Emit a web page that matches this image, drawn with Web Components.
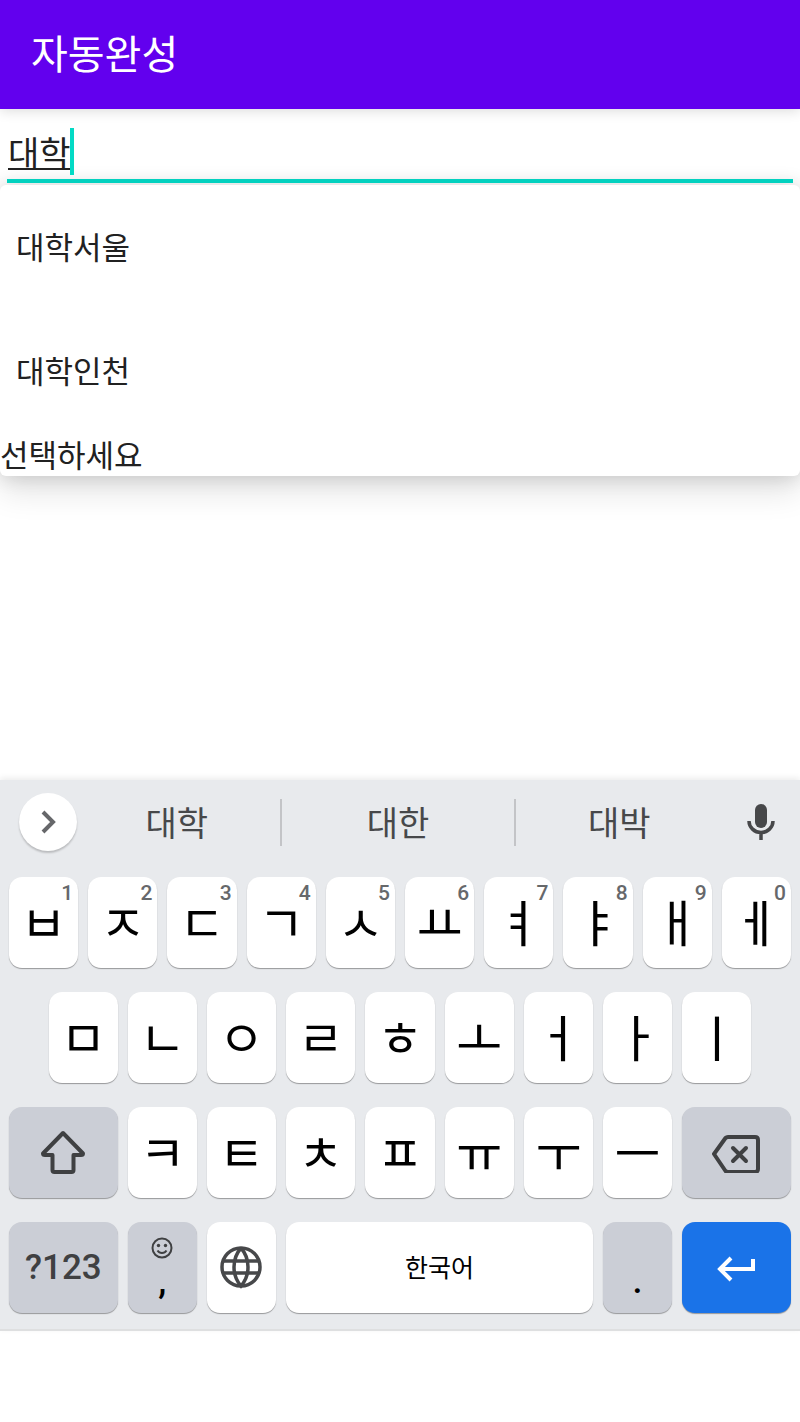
<!DOCTYPE html>
<html lang="ko">
<head>
<meta charset="utf-8">
<meta name="viewport" content="width=device-width, initial-scale=1">
<title>자동완성</title>
<style>
  body { margin: 0; background: #fff; color: #212121; font-family: Roboto, "Noto Sans CJK KR", sans-serif; }
</style>
</head>
<body>
<app-screen>
  <app-bar slot="bar">자동완성</app-bar>
  <auto-complete value="대학" label="검색어">
    <suggestion-item>대학서울</suggestion-item>
    <suggestion-item>대학인천</suggestion-item>
    <span slot="hint">선택하세요</span>
  </auto-complete>
  <soft-keyboard slot="keyboard">
    <candidate-bar slot="candidates">
      <candidate-word>대학</candidate-word>
      <candidate-word divided>대한</candidate-word>
      <candidate-word>대박</candidate-word>
    </candidate-bar>
    <key-cap hint="1">ㅂ</key-cap><key-cap hint="2">ㅈ</key-cap><key-cap hint="3">ㄷ</key-cap><key-cap hint="4">ㄱ</key-cap><key-cap hint="5">ㅅ</key-cap><key-cap hint="6">ㅛ</key-cap><key-cap hint="7">ㅕ</key-cap><key-cap hint="8">ㅑ</key-cap><key-cap hint="9">ㅐ</key-cap><key-cap hint="0">ㅔ</key-cap>
    <key-cap indent>ㅁ</key-cap><key-cap>ㄴ</key-cap><key-cap>ㅇ</key-cap><key-cap>ㄹ</key-cap><key-cap>ㅎ</key-cap><key-cap>ㅗ</key-cap><key-cap>ㅓ</key-cap><key-cap>ㅏ</key-cap><key-cap>ㅣ</key-cap>
    <key-cap wide tone="grey" row-start label="Shift"><key-icon name="shift"></key-icon></key-cap><key-cap>ㅋ</key-cap><key-cap>ㅌ</key-cap><key-cap>ㅊ</key-cap><key-cap>ㅍ</key-cap><key-cap>ㅠ</key-cap><key-cap>ㅜ</key-cap><key-cap>ㅡ</key-cap><key-cap wide tone="grey" label="삭제"><key-icon name="delete"></key-icon></key-cap>
    <key-cap wide tone="grey" face="label">?123</key-cap><key-cap tone="grey" face="low">,<key-icon slot="top" name="smile"></key-icon></key-cap><key-cap label="언어 전환"><key-icon name="globe"></key-icon></key-cap><key-cap space face="small">한국어</key-cap><key-cap tone="grey" face="low">.</key-cap><key-cap wide tone="blue" label="Enter"><key-icon name="enter"></key-icon></key-cap>
  </soft-keyboard>
</app-screen>

<script>
const define = (name, html, setup) => {
  const template = document.createElement('template');
  template.innerHTML = html;
  customElements.define(name, class extends HTMLElement {
    connectedCallback() {
      if (this.shadowRoot) return;
      const root = this.attachShadow({ mode: 'open' });
      root.append(template.content.cloneNode(true));
      if (setup) setup(this, root);
    }
  });
};

define('app-screen', `
  <style>
    :host { display: flex; flex-direction: column; min-height: 100vh; }
    main { flex: 1; }
    footer { padding-bottom: 91px; }
  </style>
  <slot name="bar"></slot>
  <main><slot></slot></main>
  <footer><slot name="keyboard"></slot></footer>`);

define('app-bar', `
  <style>
    :host { display: block; background: #6200ee; color: #fff; box-shadow: 0 2px 12px rgba(0,0,0,.14); }
    h1 { margin: 0; padding: 26px 31px 23px; font-size: 40px; font-weight: 400; line-height: 60px; }
  </style>
  <header><h1><slot></slot></h1></header>`);

define('auto-complete', `
  <style>
    :host { display: block; }
    .field { position: relative; margin: 0 7px; padding-top: 21px; height: 49px; border-bottom: 4px solid #03d1bf; }
    input { display: block; box-sizing: border-box; width: 100%; height: 48px; margin: 0; padding: 0 1px; border: 0; outline: 0; background: none; color: #212121; font: 34px/48px Roboto, "Noto Sans CJK KR", sans-serif; text-decoration: underline; text-decoration-thickness: 2px; text-underline-offset: 2px; caret-color: transparent; }
    .caret { position: absolute; left: 63px; top: 19px; width: 4px; height: 47px; background: #03dac5; }
    .popup { margin-top: 2px; border-radius: 6px; background: #fff; box-shadow: 0 16px 32px rgba(0,0,0,.11), 0 0 20px rgba(0,0,0,.16); }
    [role="listbox"] { padding-top: 2px; }
    p { margin: 0; height: 41px; font-size: 31px; line-height: 43px; }
  </style>
  <div class="field"><input type="text"><span class="caret"></span></div>
  <div class="popup"><div role="listbox"><slot></slot></div><p><slot name="hint"></slot></p></div>`,
  (host, root) => {
    const input = root.querySelector('input');
    input.value = host.getAttribute('value');
    input.setAttribute('aria-label', host.getAttribute('label'));
  });

define('suggestion-item', `
  <style>
    :host { display: block; }
    div { padding: 0 16px; font-size: 31px; line-height: 124px; }
  </style>
  <div role="option"><slot></slot></div>`);

define('soft-keyboard', `
  <style>
    :host { display: block; background: #e8eaed; border-bottom: 2px solid #dedfe0; box-shadow: 0 -2px 6px rgba(0,0,0,.08); }
    .keys { display: grid; grid-template-columns: repeat(20, minmax(0, 1fr)); gap: 24px 10px; padding: 13px 9px 16px; }
  </style>
  <slot name="candidates"></slot>
  <div class="keys"><slot></slot></div>`);

define('candidate-bar', `
  <style>
    :host { display: grid; grid-template-columns: 73px 208fr 236fr 208fr 77px; align-items: center; height: 84px; }
    .more { width: 58px; height: 58px; margin-left: 19px; padding: 0; border: 0; border-radius: 50%; background: #fff; box-shadow: 0 2px 2px rgba(0,0,0,.2); }
    .mic { justify-self: center; padding: 0; border: 0; background: none; }
    svg { display: block; margin: auto; }
  </style>
  <button class="more" aria-label="더보기"><svg width="58" height="58" fill="none" stroke="#66676a" stroke-width="4"><path d="M24 19 34 29 24 39"/></svg></button>
  <slot></slot>
  <button class="mic" aria-label="음성 입력"><svg width="30" height="40" fill="#47484a"><rect x="8" y="2" width="12" height="24" rx="6"/><path d="M2 19a12 11.500 0 0 0 24 0M14 31v7" fill="none" stroke="#47484a" stroke-width="3.500"/></svg></button>`);

define('candidate-word', `
  <style>
    :host { display: block; }
    button { display: block; width: 100%; height: 47px; padding: 3px 0 0; border: 0; background: none; color: #47484a; font: 34px/44px Roboto, "Noto Sans CJK KR", sans-serif; }
    :host([divided]) button { border: solid #c3c4c7; border-width: 0 2px; }
  </style>
  <button><slot></slot></button>`);

define('key-cap', `
  <style>
    :host { display: block; grid-column: span 2; }
    :host([indent]) { grid-column: 2 / span 2; }
    :host([wide]) { grid-column: span 3; }
    :host([row-start]) { grid-column: 1 / span 3; }
    :host([space]) { grid-column: span 8; }
    button { position: relative; display: flex; align-items: center; justify-content: center; box-sizing: border-box; width: 100%; height: 91px; margin: 0; padding: 0 0 6px; border: 0; border-radius: 13px; background: #fff; color: #000; box-shadow: 0 1px 1px rgba(0,0,0,.35); font: 400 50px/72px "Noto Sans CJK KR", sans-serif; }
    :host([label]) button { padding: 0; }
    :host([tone="grey"]) button { background: #cbced6; }
    :host([tone="blue"]) button { background: #1a73e8; }
    :host([face="label"]) button { padding: 0; color: #3f4042; font: 500 35px/48px Roboto, sans-serif; }
    :host([face="small"]) button { padding-bottom: 4px; font-size: 25px; }
    :host([face="low"]) button { flex-direction: column; justify-content: flex-end; padding-bottom: 12px; font: 500 36px/40px Roboto, sans-serif; }
    .hint { position: absolute; top: 3px; right: 5px; color: #66686b; font: 500 21px/26px Roboto, sans-serif; }
    .hint:empty { display: none; }
    .top { position: absolute; top: 15px; }
  </style>
  <button type="button"><span class="top"><slot name="top"></slot></span><slot></slot><span class="hint"></span></button>`,
  (host, root) => {
    root.querySelector('.hint').textContent = host.getAttribute('hint') || '';
    if (host.hasAttribute('label')) root.querySelector('button').setAttribute('aria-label', host.getAttribute('label'));
  });

const icons = {
  shift: '<svg width="48" height="46" fill="none" stroke="#3f4042" stroke-width="4" stroke-linejoin="round"><path d="M24 3 4 23.500Q4 25 6 25H13.500V40Q13.500 42 15.500 42H32.500Q34.500 42 34.500 40V25H42Q44 25 44 23.500Z"/></svg>',
  delete: '<svg width="52" height="40" fill="none" stroke="#3f4042" stroke-width="4" stroke-linejoin="round"><path d="M3 21 14.500 5Q15.500 4 17 4H44Q47 4 47 7V36Q47 39 44 39H17Q15.500 39 14.500 38Z"/><path d="M22 15 35 28M35 15 22 28" stroke-linecap="round"/></svg>',
  smile: '<svg width="22" height="22" fill="none" stroke="#3f4042" stroke-width="2"><circle cx="11" cy="11" r="9.500"/><path d="M6.500 13.500Q8 16 11 16T15.500 13.500"/><g fill="#3f4042" stroke="none"><circle cx="7.500" cy="8.500" r="1.700"/><circle cx="14.500" cy="8.500" r="1.700"/></g></svg>',
  globe: '<svg width="44" height="44" fill="none" stroke="#47484a" stroke-width="3.500"><circle cx="21" cy="21" r="19"/><path d="M4 15H38M4 27H38M21 2Q14 10 14 21T21 40Q28 32 28 21T21 2"/></svg>',
  enter: '<svg width="40" height="28" fill="none" stroke="#fff" stroke-width="4"><path d="M36 5V15H4M14 4 3 15 14 26"/></svg>'
};
define('key-icon', `
  <style>
    :host { display: block; }
    svg { display: block; }
  </style>`,
  (host, root) => root.append(document.createRange().createContextualFragment(icons[host.getAttribute('name')])));
</script>
</body>
</html>
